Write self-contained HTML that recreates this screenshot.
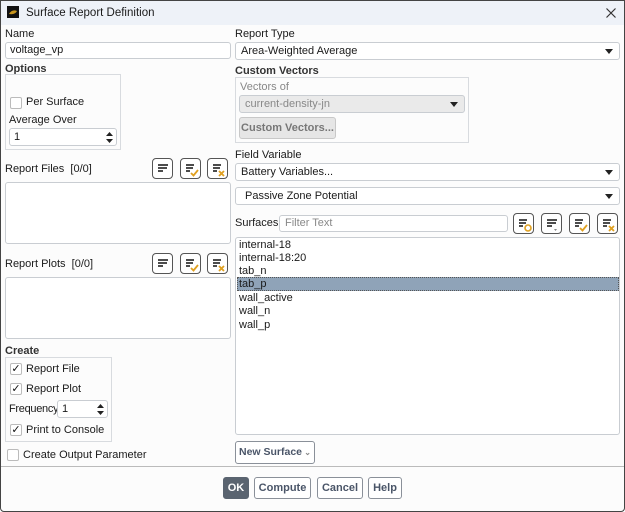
<!DOCTYPE html>
<html><head><meta charset="utf-8">
<style>
*{box-sizing:border-box;margin:0;padding:0}
body{width:625px;height:512px;overflow:hidden;background:#fff;font-family:"Liberation Sans",sans-serif;font-size:11px;color:#1a1a1a}
#win{position:absolute;left:0;top:0;width:625px;height:512px;background:#fcfcfc}
#frame{position:absolute;left:0;top:0;width:625px;height:512px;border:1px solid #444;border-radius:0 0 4px 4px;pointer-events:none}
#title{position:absolute;left:0;top:0;width:625px;height:25px;background:#eef2f8}
.a{position:absolute;white-space:nowrap}
.lbl{position:absolute;white-space:nowrap;line-height:12px}
.b{font-weight:bold;color:#333}
.inp{position:absolute;background:#fff;border:1px solid #c9cdd2;border-radius:3px}
.grp{position:absolute;border:1px solid #d8dbdf}
.dd{position:absolute;background:#fff;border:1px solid #c9cdd2;border-radius:3px;padding-left:5px;line-height:16px}
.dd:after{content:"";position:absolute;right:6px;top:6px;border-left:4px solid transparent;border-right:4px solid transparent;border-top:5px solid #222}
.cb{position:absolute;width:12px;height:12px;border:1px solid #bbb;background:#fff;border-radius:2px;font-size:11px;line-height:10px;text-align:center;color:#111}
.ib{position:absolute;width:21px;height:21px;border:1px solid #555;border-radius:4px;background:#fff}
.btn{position:absolute;border:1px solid #8a9099;border-radius:3px;background:#fff;font-weight:bold;color:#4a5568;text-align:center;font-size:11px;white-space:nowrap}
.spin{position:absolute;right:3px;width:7px}
.list{position:absolute;background:#fff;border:1px solid #c9cdd2;border-radius:3px}
.it{position:absolute;left:3px;line-height:13px}
</style></head><body>
<div id="win">
<div id="title"></div>
<svg class="a" style="left:7px;top:6px" width="12" height="12"><rect width="12" height="12" fill="#111"/><path d="M2 8 Q5 3 10 5 Q8 9 2 8Z" fill="#c8961e"/></svg>
<div class="lbl" style="left:26px;top:7px;font-size:11.5px">Surface Report Definition</div>
<svg class="a" style="left:606px;top:8px" width="10" height="10"><path d="M0.5 0.5L9.5 9.5M9.5 0.5L0.5 9.5" stroke="#333" stroke-width="1.2"/></svg>

<div class="lbl" style="left:5px;top:28px">Name</div>
<div class="inp" style="left:5px;top:42px;width:226px;height:17px;padding-left:4px;line-height:15px">voltage_vp</div>
<div class="lbl b" style="left:5px;top:63px">Options</div>
<div class="grp" style="left:5px;top:74px;width:116px;height:76px"></div>
<div class="cb" style="left:10px;top:97px"></div>
<div class="lbl" style="left:26px;top:96px">Per Surface</div>
<div class="lbl" style="left:9px;top:114px">Average Over</div>
<div class="inp" style="left:9px;top:128px;width:108px;height:18px;padding-left:4px;line-height:16px">1
<svg class="spin" style="top:3px" width="7" height="11"><path d="M0 4L3.5 0L7 4Z M0 7L3.5 11L7 7Z" fill="#222"/></svg></div>

<div class="lbl" style="left:5px;top:163px">Report Files &nbsp;[0/0]</div>
<div class="list" style="left:5px;top:182px;width:226px;height:62px"></div>
<div class="lbl" style="left:5px;top:258px">Report Plots &nbsp;[0/0]</div>
<div class="list" style="left:5px;top:277px;width:226px;height:62px"></div>

<div class="lbl b" style="left:5px;top:345px">Create</div>
<div class="grp" style="left:5px;top:357px;width:107px;height:85px"></div>
<div class="cb" style="left:10px;top:363px">✓</div>
<div class="lbl" style="left:26px;top:363px">Report File</div>
<div class="cb" style="left:10px;top:383px">✓</div>
<div class="lbl" style="left:26px;top:383px">Report Plot</div>
<div class="lbl" style="left:9px;top:403px;letter-spacing:-0.3px">Frequency</div>
<div class="inp" style="left:57px;top:400px;width:51px;height:18px;padding-left:4px;line-height:16px">1
<svg class="spin" style="top:3px" width="7" height="11"><path d="M0 4L3.5 0L7 4Z M0 7L3.5 11L7 7Z" fill="#222"/></svg></div>
<div class="cb" style="left:10px;top:424px">✓</div>
<div class="lbl" style="left:26px;top:424px">Print to Console</div>
<div class="cb" style="left:7px;top:449px"></div>
<div class="lbl" style="left:23px;top:449px">Create Output Parameter</div>

<div class="lbl" style="left:235px;top:28px">Report Type</div>
<div class="dd" style="left:235px;top:42px;width:385px;height:18px">Area-Weighted Average</div>
<div class="lbl b" style="left:235px;top:65px">Custom Vectors</div>
<div class="grp" style="left:235px;top:77px;width:234px;height:66px"></div>
<div class="lbl" style="left:240px;top:81px;color:#888">Vectors of</div>
<div class="dd" style="left:239px;top:95px;width:226px;height:18px;background:#eaeaea;color:#888">current-density-jn</div>
<div class="btn" style="left:239px;top:117px;width:97px;height:22px;line-height:20px;background:#e6e6e6;color:#777;border-color:#c8c8c8">Custom Vectors...</div>

<div class="lbl" style="left:235px;top:149px">Field Variable</div>
<div class="dd" style="left:235px;top:163px;width:385px;height:18px">Battery Variables...</div>
<div class="dd" style="left:235px;top:187px;width:385px;height:18px;padding-left:9px">Passive Zone Potential</div>

<div class="lbl" style="left:235px;top:217px">Surfaces</div>
<div class="inp" style="left:279px;top:215px;width:229px;height:17px;padding-left:5px;line-height:15px;color:#888">Filter Text</div>

<div class="list" style="left:235px;top:237px;width:385px;height:198px">
<div class="it" style="top:1px">internal-18</div>
<div class="it" style="top:14px">internal-18:20</div>
<div class="it" style="top:27px">tab_n</div>
<div style="position:absolute;left:1px;top:39px;width:382px;height:14px;background:#8fa3b8;border:1px dotted #555"></div>
<div class="it" style="top:40px">tab_p</div>
<div class="it" style="top:54px">wall_active</div>
<div class="it" style="top:67px">wall_n</div>
<div class="it" style="top:81px">wall_p</div>
</div>
<div class="btn" style="left:235px;top:441px;width:80px;height:23px;line-height:21px;text-align:left;padding-left:3px;font-size:10.5px">New Surface<span style="font-size:8px;color:#888"> ⌄</span></div>

<div style="position:absolute;left:1px;top:466px;width:623px;height:1px;background:#bbb"></div>
<div class="btn" style="left:223px;top:477px;width:26px;height:22px;line-height:20px;background:#5a6470;color:#fff;border-color:#5a6470">OK</div>
<div class="btn" style="left:254px;top:477px;width:57px;height:22px;line-height:20px">Compute</div>
<div class="btn" style="left:317px;top:477px;width:46px;height:22px;line-height:20px">Cancel</div>
<div class="btn" style="left:368px;top:477px;width:34px;height:22px;line-height:20px">Help</div>
</div>
<div id="frame"></div>

<svg width="0" height="0" style="position:absolute">
<defs>
<g id="ln"><path d="M5 6H15M5 9H14M5 12H10" stroke="#111" stroke-width="1.5"/></g>
<g id="ln2"><path d="M5 6H13M5 9H12M5 12H9" stroke="#111" stroke-width="1.5"/></g>
<g id="ck"><path d="M10 14L12.5 16.5L17 11" stroke="#e0a020" stroke-width="1.8" fill="none"/></g>
<g id="xx"><path d="M11 12L16 17M16 12L11 17" stroke="#e0a020" stroke-width="1.8"/></g>
<g id="ci"><circle cx="14" cy="14" r="3" stroke="#e0a020" stroke-width="1.6" fill="none"/></g>
<g id="dn"><path d="M12 15L15 15L13.5 17Z" fill="#888"/></g>
</defs></svg>
<div class="ib" style="left:152px;top:158px"><svg width="19" height="19"><use href="#ln"/></svg></div>
<div class="ib" style="left:180px;top:158px"><svg width="19" height="19"><use href="#ln2"/><use href="#ck"/></svg></div>
<div class="ib" style="left:207px;top:158px"><svg width="19" height="19"><use href="#ln2"/><use href="#xx"/></svg></div>
<div class="ib" style="left:152px;top:253px"><svg width="19" height="19"><use href="#ln"/></svg></div>
<div class="ib" style="left:180px;top:253px"><svg width="19" height="19"><use href="#ln2"/><use href="#ck"/></svg></div>
<div class="ib" style="left:207px;top:253px"><svg width="19" height="19"><use href="#ln2"/><use href="#xx"/></svg></div>
<div class="ib" style="left:513px;top:213px"><svg width="19" height="19"><use href="#ln2"/><use href="#ci"/></svg></div>
<div class="ib" style="left:541px;top:213px"><svg width="19" height="19"><use href="#ln"/><use href="#dn"/></svg></div>
<div class="ib" style="left:569px;top:213px"><svg width="19" height="19"><use href="#ln2"/><use href="#ck"/></svg></div>
<div class="ib" style="left:597px;top:213px"><svg width="19" height="19"><use href="#ln2"/><use href="#xx"/></svg></div>
</body></html>
